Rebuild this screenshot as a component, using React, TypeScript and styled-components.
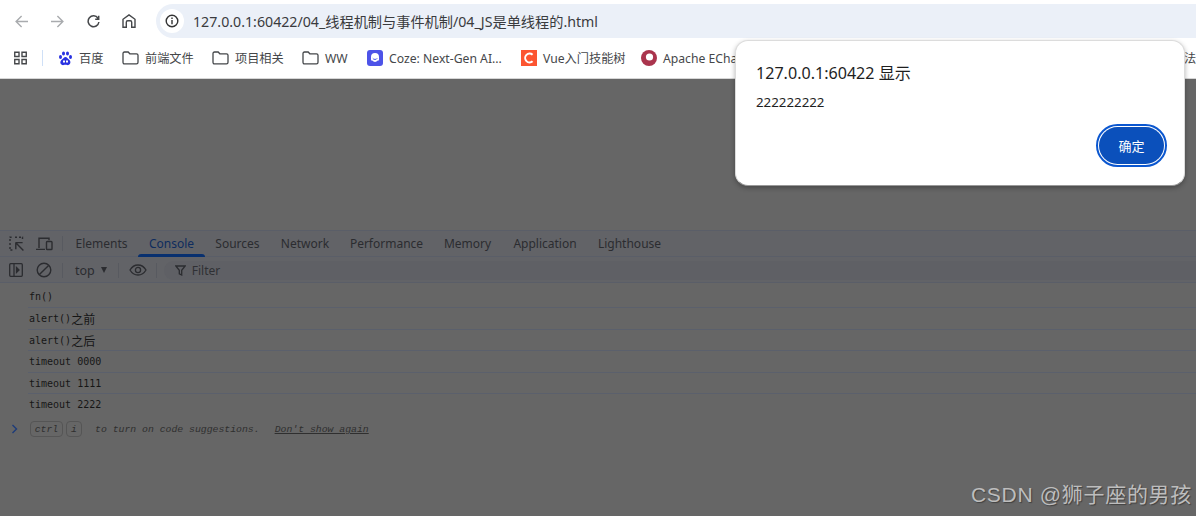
import React from "react";
import styled, { createGlobalStyle } from "styled-components";

const Global = createGlobalStyle`
  html, body { margin: 0; padding: 0; width: 1196px; height: 516px; overflow: hidden; background: #666; }
  #root { width: 1196px; height: 516px; }
  * { box-sizing: border-box; }
`;
const UI = `"Noto Sans", "Noto Sans CJK SC", sans-serif`;
const Mono = `"DejaVu Sans Mono", "Liberation Mono", "Noto Sans CJK SC", monospace`;

const Page = styled.div`
  position: relative; width: 1196px; height: 516px; display: flex; flex-direction: column;
  font-family: ${UI}; overflow: hidden; background: #666;
`;
const Toolbar = styled.div`
  height: 42px; background: #fff; display: flex; align-items: center; padding-left: 15px; flex: none;
`;
const NavButton = styled.span<{ $w: number }>`
  width: ${(p) => p.$w}px; height: 20px; display: flex; align-items: center; flex: none;
`;
const Omnibox = styled.div`
  flex: 1; height: 34px; margin-bottom: 1px; background: #ebf0f8; border-radius: 17px 0 0 17px;
  display: flex; align-items: center; padding-left: 4px;
`;
const InfoBadge = styled.span`
  width: 24px; height: 24px; border-radius: 50%; background: #fff; display: flex; align-items: center; justify-content: center; flex: none;
`;
const Url = styled.span`
  margin-left: 9px; font-size: 14.2px; color: #3a3b3e; white-space: nowrap;
`;
const Bookmarks = styled.div`
  height: 37px; background: #fff; border-bottom: 1px solid #d6d6d6; display: flex; align-items: center; flex: none;
  padding: 0 0 4px 14px; overflow: hidden;
`;
const AppsDivider = styled.span`
  width: 1px; height: 16px; background: #cfe0f7; margin: 0 15px 0 15px; flex: none;
`;
const Bookmark = styled.span<{ $w: number }>`
  width: ${(p) => p.$w}px; display: flex; align-items: center; gap: 6px; font-size: 12.2px; color: #45474a; white-space: nowrap; flex: none;
`;
const Blank = styled.div`
  height: 151px; flex: none; background: #666;
`;
const Devtools = styled.div`
  flex: 1; display: flex; flex-direction: column; background: #666;
`;
const Tabs = styled.div`
  height: 27px; background: #626367; border-top: 1px solid #5a5e68; border-bottom: 1px solid #5a5e68;
  display: flex; align-items: stretch; padding-left: 9px; flex: none;
`;
const IconSlot = styled.span<{ $w: number }>`
  width: ${(p) => p.$w}px; display: flex; align-items: center; flex: none;
`;
const VRule = styled.span<{ $ml: number; $mr: number }>`
  width: 1px; height: 15px; background: #585a60; align-self: center; margin: 0 ${(p) => p.$mr}px 0 ${(p) => p.$ml}px; flex: none;
`;
const Tab = styled.span<{ $active?: boolean; $w: number }>`
  width: ${(p) => p.$w}px; text-align: center; font-size: 12px; line-height: 26px; flex: none;
  color: ${(p) => (p.$active ? "#0e2c5e" : "#2b2c30")};
  position: relative;
  ${(p) => p.$active && `&::after { content: ""; position: absolute; left: 0; right: 0; bottom: -1px; height: 3px; border-radius: 3px 3px 0 0; background: #08306f; }`}
`;
const ConsoleBar = styled.div`
  height: 26px; background: #626367; border-bottom: 1px solid #5a5e68; display: flex; align-items: center; padding: 1px 0 0 9px; flex: none;
`;
const ContextLabel = styled.span`
  font-size: 12.5px; color: #2b2c30; margin-right: 6px;
`;
const Caret = styled.span`
  width: 0; height: 0; border-left: 3.5px solid transparent; border-right: 3.5px solid transparent; border-top: 6px solid #2b2c30; flex: none;
`;
const FilterBox = styled.div`
  flex: 1; height: 19px; background: #5f6065; border-radius: 10px 0 0 10px; display: flex; align-items: center; gap: 6px;
  padding-left: 11px; font-size: 12px; color: #2f3034;
`;
const Log = styled.div`
  padding-left: 28px; flex: none;
`;
const Line = styled.div<{ $h: number; $pad?: number; $last?: boolean }>`
  height: ${(p) => p.$h}px; font-family: ${Mono}; font-size: 10px; color: #161616; display: flex; align-items: center;
  padding: ${(p) => p.$pad ?? 0}px 0 0 1px; white-space: pre; border-bottom: 1px solid ${(p) => (p.$last ? "transparent" : "#5b606c")};
`;
const Cjk = styled.span`
  font-family: "Noto Sans CJK SC", sans-serif; font-size: 12px;
`;
const Prompt = styled.div`
  display: flex; align-items: center; height: 24px; margin-top: 1px; padding-left: 11px; flex: none; font-family: "Liberation Mono", monospace;
  font-style: italic; font-size: 9.8px; color: #2f2f2f; white-space: pre;
`;
const Key = styled.span<{ $w: number }>`
  width: ${(p) => p.$w}px; height: 16px; border: 1px solid #555; border-radius: 4px; display: flex; align-items: center; justify-content: center; margin-right: 3px; flex: none;
`;
const Hint = styled.span`
  margin-left: 10px;
`;
const Dismiss = styled.span`
  margin-left: 15px; text-decoration: underline;
`;
const Dialog = styled.div`
  position: absolute; left: 735px; top: 40px; width: 450px; height: 146px; background: #fff; border-radius: 13px;
  border: 1px solid #dcdcdc; border-bottom-color: #999; box-shadow: 0 2px 5px rgba(0,0,0,.3);
  padding: 22px 20px 0; display: flex; flex-direction: column;
`;
const DialogTitle = styled.div`
  font-size: 16.1px; line-height: 21px; color: #1f1f1f;
`;
const DialogBody = styled.div`
  margin-top: 9px; font-size: 13.3px; line-height: 18px; color: #1f1f1f;
`;
const DialogActions = styled.div`
  display: flex; justify-content: flex-end; margin: 14px -2px 0 0;
`;
const Confirm = styled.button`
  width: 65px; height: 37px; border-radius: 19px; background: #0b50bb; color: #fff; border: 0; font-family: ${UI}; font-size: 13px;
  outline: 2px solid #0b57d0; outline-offset: 1px; padding: 0; margin: 2px;
`;
const Watermark = styled.div`
  position: absolute; right: 4px; top: 481px; font-family: "Liberation Sans", "Noto Sans CJK SC", sans-serif; font-size: 21px; line-height: 28px; color: #bdbdbd; white-space: nowrap;
  text-shadow: 1px 1px 1px rgba(40,40,40,.6); letter-spacing: 0.7px;
`;

const Folder = () => (
  <svg width="17" height="14" viewBox="0 0 17 14" fill="none" stroke="#44474a" strokeWidth="1.3">
    <path d="M1 2.600c0-.9.6-1.600 1.500-1.600h3.700l1.600 1.800h6.700c.9 0 1.500.6 1.500 1.500v7c0 .9-.6 1.600-1.500 1.600h-12c-.9 0-1.500-.7-1.500-1.600z" />
  </svg>
);

export default function App() {
  return (
    <Page>
      <Global />
      <Toolbar>
        <NavButton $w={36}>
          <svg width="13" height="13" viewBox="0 0 13 13" fill="none" stroke="#a9abae" strokeWidth="1.4"><path d="M13 6.500H1.200M6.600 1 1.100 6.500 6.600 12" /></svg>
        </NavButton>
        <NavButton $w={36}>
          <svg width="13" height="13" viewBox="0 0 13 13" fill="none" stroke="#a9abae" strokeWidth="1.4"><path d="M0 6.500h11.800M6.400 1l5.500 5.500L6.400 12" /></svg>
        </NavButton>
        <NavButton $w={35}>
          <svg width="13" height="13" viewBox="0 0 13 13" fill="none" stroke="#45474a" strokeWidth="1.5"><path d="M11 3.200A5.400 5.400 0 1 0 11.900 7M11.700.8v3.500H8.200" /></svg>
        </NavButton>
        <NavButton $w={34}>
          <svg width="14" height="14" viewBox="0 0 14 14" fill="none" stroke="#45474a" strokeWidth="1.4"><path d="M1 13.300V5.300L7 .9l6 4.400v8H9.700V8.200A1.400 1.400 0 0 0 8.300 6.800H5.700A1.400 1.400 0 0 0 4.300 8.200v5.100z" /></svg>
        </NavButton>
        <Omnibox>
          <InfoBadge>
            <svg width="14" height="14" viewBox="0 0 14 14" fill="none" stroke="#333" strokeWidth="1.4"><circle cx="7" cy="7" r="5.800" /><path d="M7 6v4.200M7 3.500v1.500" /></svg>
          </InfoBadge>
          <Url>127.0.0.1:60422/04_线程机制与事件机制/04_JS是单线程的.html</Url>
        </Omnibox>
      </Toolbar>
      <Bookmarks>
        <svg width="14" height="14" viewBox="0 0 14 14" fill="none" stroke="#45474a" strokeWidth="1.5"><path d="M.8.8h4.600v4.600H.8zM8.600.8h4.600v4.600H8.600zM.8 8.600h4.600v4.600H.8zM8.600 8.600h4.600v4.600H8.600z" /></svg>
        <AppsDivider />
        <Bookmark $w={64}>
          <svg width="15" height="15" viewBox="0 0 15 15" fill="#2932e1"><ellipse cx="2.500" cy="6" rx="1.500" ry="2" /><ellipse cx="5.500" cy="2.500" rx="1.500" ry="2.100" /><ellipse cx="9.500" cy="2.500" rx="1.500" ry="2.100" /><ellipse cx="12.500" cy="6" rx="1.500" ry="2" /><path d="M7.500 6c1.500 0 2.200 1.500 3.400 2.500 1.300 1 1.800 2.200 1.400 3.500-.4 1.600-2 2.400-3.200 2.100-1.100-.2-2.100-.4-3.200 0-1.400.4-3.100-.3-3.500-2-.3-1.400.3-2.500 1.600-3.600C5.300 7.500 6 6 7.500 6z" /><path d="M5 10.500h5" stroke="#fff" strokeWidth="2" strokeDasharray="2 1" /></svg>
          百度
        </Bookmark>
        <Bookmark $w={90}><Folder />前端文件</Bookmark>
        <Bookmark $w={90}><Folder />项目相关</Bookmark>
        <Bookmark $w={65}><Folder />WW</Bookmark>
        <Bookmark $w={154}>
          <svg width="16" height="16" viewBox="0 0 16 16"><rect width="16" height="16" rx="3" fill="#4d53e8" /><path d="M8 3a4 4 0 0 0-4 4v2.400c0 1 .7 1.300 1.200 1.200.9.9 1.800 1.400 2.800 1.400s2-.5 2.800-1.400c.6.1 1.200-.2 1.200-1.200V7a4 4 0 0 0-4-4z" fill="#fff" /><path d="M5.800 8.300c.6 1.500 3.800 1.500 4.400 0" stroke="#4d53e8" fill="none" /></svg>
          Coze: Next-Gen AI...
        </Bookmark>
        <Bookmark $w={120}>
          <svg width="16" height="16" viewBox="0 0 16 16"><rect width="16" height="16" fill="#fc5531" /><path d="M11.600 4.800A4.400 4.400 0 1 0 11.600 11.200" fill="none" stroke="#fff" strokeWidth="2" /></svg>
          Vue入门技能树
        </Bookmark>
        <Bookmark $w={543}>
          <svg width="16" height="16" viewBox="0 0 16 16"><circle cx="8" cy="8" r="8" fill="#aa344d" /><circle cx="8.500" cy="7" r="3.600" fill="#fff" /></svg>
          Apache ECharts
        </Bookmark>
        <Bookmark $w={12}>法</Bookmark>
      </Bookmarks>
      <Blank />
      <Devtools>
        <Tabs>
          <IconSlot $w={27}>
            <svg width="16" height="16" viewBox="0 0 16 16" fill="none" stroke="#2b2c30" strokeWidth="1.400"><path d="M1 5V1.200h3M6 1.200h2M10 1.200h3.500V4M1 7v2M1 11v3h3" strokeDasharray="2 1.400" /><path d="M6.600 6.600h7M6.800 6.800l7.600 7.600M6.800 6.600v6.600" /></svg>
          </IconSlot>
          <IconSlot $w={26}>
            <svg width="17" height="14" viewBox="0 0 17 14" fill="none" stroke="#2b2c30" strokeWidth="1.400"><path d="M3 11V1.200h10v2M0 12.400h9" /><rect x="10.500" y="4.500" width="5.500" height="8" rx=".8" /></svg>
          </IconSlot>
          <VRule $ml={0} $mr={2} />
          <Tab $w={73}>Elements</Tab>
          <Tab $active $w={67}>Console</Tab>
          <Tab $w={65}>Sources</Tab>
          <Tab $w={70}>Network</Tab>
          <Tab $w={93}>Performance</Tab>
          <Tab $w={69}>Memory</Tab>
          <Tab $w={86}>Application</Tab>
          <Tab $w={83}>Lighthouse</Tab>
        </Tabs>
        <ConsoleBar>
          <IconSlot $w={27}>
            <svg width="14" height="14" viewBox="0 0 14 14" fill="none" stroke="#2b2c30" strokeWidth="1.300"><rect x=".7" y=".7" width="12.600" height="12.600" rx="1" /><path d="M5 1v12" /><path d="M7.500 4.500 10 7l-2.500 2.500z" fill="#2b2c30" /></svg>
          </IconSlot>
          <IconSlot $w={26}>
            <svg width="16" height="16" viewBox="0 0 16 16" fill="none" stroke="#2b2c30" strokeWidth="1.400"><circle cx="8" cy="8" r="6.800" /><path d="m3.400 12.600 9.200-9.200" /></svg>
          </IconSlot>
          <VRule $ml={0} $mr={12} />
          <ContextLabel>top</ContextLabel>
          <Caret />
          <VRule $ml={11} $mr={10} />
          <IconSlot $w={27}>
            <svg width="18" height="12" viewBox="0 0 18 12" fill="none" stroke="#2b2c30" strokeWidth="1.300"><path d="M1 6c2-3.400 4.800-5 8-5s6 1.600 8 5c-2 3.400-4.800 5-8 5S3 9.400 1 6z" /><circle cx="9" cy="6" r="2.600" /></svg>
          </IconSlot>
          <VRule $ml={0} $mr={7} />
          <FilterBox>
            <svg width="11" height="11" viewBox="0 0 11 11" fill="none" stroke="#2b2c30" strokeWidth="1.300"><path d="M.8 1h9.400L6.700 5.300V10L4.300 8.800V5.300z" /></svg>
            Filter
          </FilterBox>
        </ConsoleBar>
        <Log>
          <Line $h={25} $pad={2}>fn()</Line>
          <Line $h={22}>alert()<Cjk>之前</Cjk></Line>
          <Line $h={21}>alert()<Cjk>之后</Cjk></Line>
          <Line $h={22}>timeout 0000</Line>
          <Line $h={21}>timeout 1111</Line>
          <Line $h={22} $last>timeout 2222</Line>
        </Log>
        <Prompt>
          <svg width="19" height="12" viewBox="0 0 19 12" fill="none" stroke="#1d3c7a" strokeWidth="1.400"><path d="m1.500 2 4 4-4 4" /></svg>
          <Key $w={33}>ctrl</Key>
          <Key $w={16}>i</Key>
          <Hint>to turn on code suggestions.</Hint>
          <Dismiss>Don't show again</Dismiss>
        </Prompt>
      </Devtools>
      <Dialog>
        <DialogTitle>127.0.0.1:60422 显示</DialogTitle>
        <DialogBody>222222222</DialogBody>
        <DialogActions><Confirm>确定</Confirm></DialogActions>
      </Dialog>
      <Watermark>CSDN @狮子座的男孩</Watermark>
    </Page>
  );
}
